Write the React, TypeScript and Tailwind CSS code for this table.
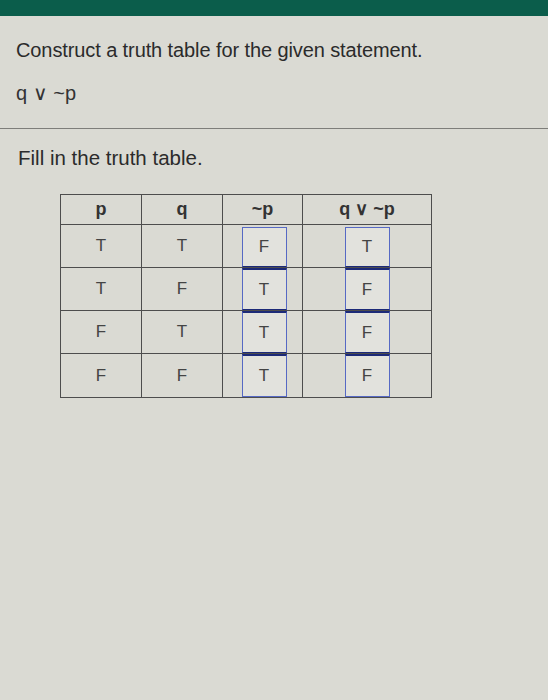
const rows = [
  ["T", "T", "F", "T"],
  ["T", "F", "T", "F"],
  ["F", "T", "T", "F"],
  ["F", "F", "T", "F"],
];

const AnswerBox = ({ value, index }: { value: string; index: number }) => {
  const first = index === 0;
  const last = index === rows.length - 1;
  return (
    <div
      className={
        "flex w-[45px] flex-1 items-center justify-center border-x border-[#5669c4] bg-[#e2e2dd] " +
        (first ? "border-t border-t-[#5669c4] " : "border-t-2 border-t-[#1c2a78] ") +
        (last ? "border-b border-b-[#5669c4]" : "border-b border-b-[#1c2a78]")
      }
    >
      {value}
    </div>
  );
};

export default function App() {
  return (
    <div
      className="min-h-[700px] w-full bg-[#dadad3] text-[#2b2b2b]"
      style={{ fontFamily: '"Liberation Sans", Arial, sans-serif' }}
    >
      <div className="h-[16px] bg-[#0b5d4b]" />

      <div className="px-[16px] pt-[22px]">
        <h1 className="text-[20px] leading-[24px] tracking-[-0.1px]">
          Construct a truth table for the given statement.
        </h1>
        <p className="mt-[19px] text-[20px] leading-[24px] text-[#333]">q ∨ ~p</p>
      </div>

      <div className="mt-[23px] h-px bg-[#7e7e7a]" />

      <div className="px-[18px] pt-[17px]">
        <p className="text-[20.5px] leading-[24px]">Fill in the truth table.</p>
      </div>

      <div className="ml-[60px] mt-[24px] w-[372px] border border-[#4d4d4d]">
        <div className="grid grid-cols-[81px_81px_80px_1fr] border-b border-[#4d4d4d] text-[18px] font-bold text-[#333]">
          <div className="flex h-[29px] items-center justify-center border-r border-[#4d4d4d]">p</div>
          <div className="flex h-[29px] items-center justify-center border-r border-[#4d4d4d]">q</div>
          <div className="flex h-[29px] items-center justify-center border-r border-[#4d4d4d]">~p</div>
          <div className="flex h-[29px] items-center justify-center">q ∨ ~p</div>
        </div>
        {rows.map((r, i) => (
          <div
            key={i}
            className={
              "grid h-[43px] grid-cols-[81px_81px_80px_1fr] text-[17px] text-[#444] " +
              (i < rows.length - 1 ? "border-b border-[#4d4d4d]" : "")
            }
          >
            <div className="flex items-center justify-center border-r border-[#4d4d4d]">{r[0]}</div>
            <div className="flex items-center justify-center border-r border-[#4d4d4d]">{r[1]}</div>
            <div
              className={
                "flex flex-col items-center border-r border-[#4d4d4d] pl-[3px] " +
                (i === 0 ? "pt-[2px]" : "")
              }
            >
              <AnswerBox value={r[2]} index={i} />
            </div>
            <div className={"flex flex-col items-center " + (i === 0 ? "pt-[2px]" : "")}>
              <AnswerBox value={r[3]} index={i} />
            </div>
          </div>
        ))}
      </div>
    </div>
  );
}
